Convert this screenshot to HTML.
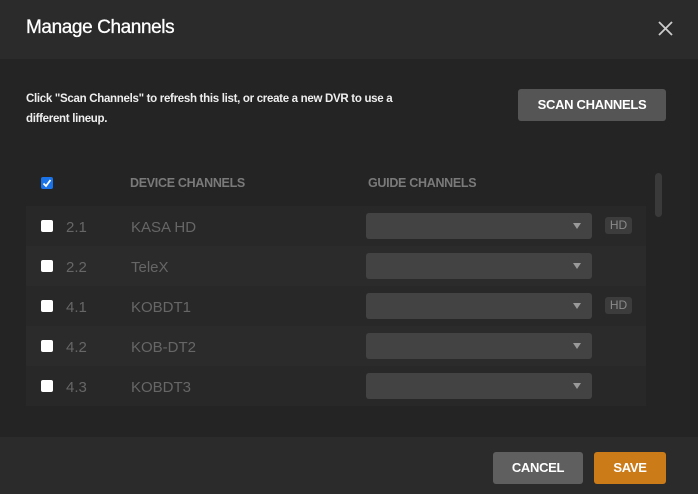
<!DOCTYPE html><html><head><style>
*{margin:0;padding:0;box-sizing:border-box}
body{width:698px;height:494px;background:#242424;font-family:"Liberation Sans",sans-serif;position:relative;overflow:hidden}
.a{position:absolute}
.hdr{left:0;top:0;width:698px;height:59px;background:#2b2b2b}
.ftr{left:0;top:437px;width:698px;height:57px;background:#2b2b2b}
.btn{color:#fff;font-weight:bold;font-size:13px;text-align:center;border-radius:3px;letter-spacing:-0.3px}
.row{left:26px;width:620px;height:40px}
.cb{width:12px;height:12px;background:#fff;border-radius:2px;left:41px}
.num{left:66px;color:#666;font-size:15px}
.nm{left:131px;color:#666;font-size:15px}
.sel{left:366px;width:226px;height:26px;background:#434343;border-radius:3px}
.sel:after{content:"";position:absolute;right:11px;top:10px;border-left:4px solid transparent;border-right:4px solid transparent;border-top:6px solid #9a9a9a}
.hd{left:605px;width:27px;height:17px;background:#3c3c3c;border-radius:3px;color:#8a8a8a;font-size:12px;text-align:center;line-height:17px}
.th{color:#7a7a7a;font-weight:bold;font-size:12.5px;top:176px;letter-spacing:-0.3px}
</style></head><body>
<div class="a hdr"></div>
<div class="a" style="left:26px;top:17px;color:#fff;font-size:19px;letter-spacing:-0.4px;-webkit-text-stroke:0.3px #fff">Manage Channels</div>
<svg class="a" style="left:658px;top:21px" width="15" height="15"><path d="M1 1L14 14M14 1L1 14" stroke="#ccc" stroke-width="1.8"/></svg>
<div class="a" style="left:26px;top:89px;color:#eee;font-size:11.5px;width:440px;font-weight:bold;letter-spacing:-0.3px;line-height:20px">Click "Scan Channels" to refresh this list, or create a new DVR to use a<br>different lineup.</div>
<div class="a btn" style="left:518px;top:89px;width:148px;height:32px;background:#555;line-height:32px">SCAN CHANNELS</div>
<div class="a" style="left:41px;top:177px;width:12px;height:12px;background:#1a73e8;border-radius:2px"><svg width="12" height="12" style="display:block"><path d="M2.5 6.5L5 9L9.5 3" stroke="#fff" stroke-width="1.8" fill="none"/></svg></div>
<div class="a th" style="left:130px">DEVICE CHANNELS</div>
<div class="a th" style="left:368px">GUIDE CHANNELS</div>
<div class="a" style="left:655px;top:173px;width:7px;height:44px;background:#3a3a3a;border-radius:4px"></div>

<div class="a row" style="top:206px;background:#282828"></div>
<div class="a row" style="top:246px;background:#2b2b2b"></div>
<div class="a row" style="top:286px;background:#282828"></div>
<div class="a row" style="top:326px;background:#2b2b2b"></div>
<div class="a row" style="top:366px;background:#282828"></div>

<div class="a cb" style="top:220px"></div><div class="a num" style="top:219px">2.1</div><div class="a nm" style="top:219px">KASA HD</div><div class="a sel" style="top:213px"></div><div class="a hd" style="top:217px">HD</div>
<div class="a cb" style="top:260px"></div><div class="a num" style="top:259px">2.2</div><div class="a nm" style="top:259px">TeleX</div><div class="a sel" style="top:253px"></div>
<div class="a cb" style="top:300px"></div><div class="a num" style="top:299px">4.1</div><div class="a nm" style="top:299px">KOBDT1</div><div class="a sel" style="top:293px"></div><div class="a hd" style="top:297px">HD</div>
<div class="a cb" style="top:340px"></div><div class="a num" style="top:339px">4.2</div><div class="a nm" style="top:339px">KOB-DT2</div><div class="a sel" style="top:333px"></div>
<div class="a cb" style="top:380px"></div><div class="a num" style="top:379px">4.3</div><div class="a nm" style="top:379px">KOBDT3</div><div class="a sel" style="top:373px"></div>

<div class="a ftr"></div>
<div class="a btn" style="left:493px;top:452px;width:90px;height:32px;background:#5f5f5f;line-height:32px">CANCEL</div>
<div class="a btn" style="left:594px;top:452px;width:72px;height:32px;background:#cc7b19;line-height:32px">SAVE</div>
</body></html>
